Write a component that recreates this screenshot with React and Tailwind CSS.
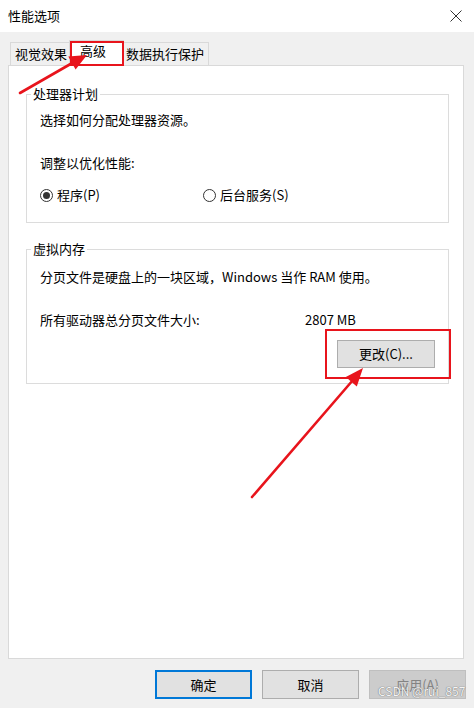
import React from "react";

const Radio = ({ checked, label }) => (
  <div className="flex items-center">
    <span className="w-[13px] h-[13px] rounded-full border border-[#333333] bg-white flex items-center justify-center">
      {checked && <span className="w-[7px] h-[7px] rounded-full bg-[#333333]"></span>}
    </span>
    <span className="ml-[4px]">{label}</span>
  </div>
);

const GroupBox = ({ title, className, children }) => (
  <fieldset className={`border border-[#dcdcdc] pl-[13px] ${className}`}>
    <legend className="-ml-[9px] px-[2px] leading-[18px]">{title}</legend>
    {children}
  </fieldset>
);

const Arrows = () => (
  <svg className="absolute inset-0 z-30 pointer-events-none" width="474" height="708">
    <line x1="20" y1="93" x2="74" y2="62" stroke="#e8141c" strokeWidth="2.6" strokeLinecap="round" />
    <polygon points="87,55 75.6,69.5 68.3,56.6" fill="#e8141c" />
    <line x1="252" y1="497" x2="353" y2="380" stroke="#e8141c" strokeWidth="2.6" strokeLinecap="round" />
    <polygon points="363,368 356.8,386.4 345.8,377" fill="#e8141c" />
  </svg>
);

export default function App() {
  return (
    <div className="relative w-[474px] h-[708px] overflow-hidden bg-[#f0f0f0] text-[13px] text-black font-['Noto_Sans_CJK_SC','Noto_Sans',sans-serif]">
      {/* title bar */}
      <div className="h-[32px] bg-white flex items-center justify-between pl-[8px] pr-[12px]">
        <span className="leading-[18px]">性能选项</span>
        <svg width="12" height="12" viewBox="0 0 12 12">
          <path d="M0.5 0.5 L11.5 11.5 M11.5 0.5 L0.5 11.5" stroke="#333333" strokeWidth="1" />
        </svg>
      </div>

      <div className="pt-[10px]">
        {/* tabs */}
        <div className="flex items-end h-[23px] pl-[10px]">
          <div className="h-[23px] w-[60px] border border-b-0 border-[#d9d9d9] bg-[#f0f0f0] flex items-center pl-[4px] leading-[18px]">
            视觉效果
          </div>
          <div className="relative z-10 -mb-px -ml-px h-[26px] w-[55px] border border-b-0 border-[#d9d9d9] bg-white flex items-start pt-[1px] pl-[10px] leading-[18px]">
            高级
          </div>
          <div className="h-[23px] w-[86px] -ml-px border border-b-0 border-[#d9d9d9] bg-[#f0f0f0] flex items-center pl-[2px] leading-[18px]">
            数据执行保护
          </div>
        </div>

        {/* tab panel */}
        <div className="ml-[8px] w-[456px] h-[594px] bg-white border border-[#d9d9d9] pt-[19px] pl-[17px] pr-[14px]">
          <GroupBox title="处理器计划" className="pb-[18px]">
            <div className="pt-[8px] leading-[18px]">选择如何分配处理器资源。</div>
            <div className="mt-[25px] leading-[18px]">调整以优化性能:</div>
            <div className="mt-[14px] flex leading-[18px]">
              <div className="w-[163px]">
                <Radio checked label="程序(P)" />
              </div>
              <Radio label="后台服务(S)" />
            </div>
          </GroupBox>

          <GroupBox title="虚拟内存" className="mt-[17px] pb-[15px] pr-[13px]">
            <div className="pt-[10px] leading-[18px]">
              分页文件是硬盘上的一块区域，Windows 当作 RAM 使用。
            </div>
            <div className="mt-[25px] flex leading-[18px]">
              <span className="w-[265px]">所有驱动器总分页文件大小:</span>
              <span>2807 MB</span>
            </div>
            <div className="mt-[11px] flex justify-end">
              <button className="w-[98px] h-[28px] bg-[#e1e1e1] border border-[#adadad] leading-[18px]">
                更改(C)...
              </button>
            </div>
          </GroupBox>
        </div>

        {/* dialog buttons */}
        <div className="mt-[11px] flex justify-end gap-[10px] pr-[8px]">
          <button className="w-[97px] h-[29px] bg-[#e1e1e1] border-2 border-[#0078d7] leading-[18px]">
            确定
          </button>
          <button className="w-[97px] h-[29px] bg-[#e1e1e1] border border-[#adadad] leading-[18px]">
            取消
          </button>
          <button className="w-[97px] h-[29px] bg-[#cccccc] border border-[#bfbfbf] text-[#838383] leading-[18px]">
            应用(A)
          </button>
        </div>
      </div>

      {/* annotation boxes */}
      <div className="absolute left-[70px] top-[41px] w-[54px] h-[25px] border-2 border-[#e8141c] z-20"></div>
      <div className="absolute left-[325px] top-[329px] w-[126px] h-[50px] border-2 border-[#e8141c]"></div>
      <Arrows />

      {/* watermark */}
      <div className="absolute left-[378px] top-[684px] text-[12px] leading-[14px] text-[#f4f4f4] [text-shadow:0_0_1px_#777,0_0_1px_#777]">
        CSDN @rui_857
      </div>
    </div>
  );
}
